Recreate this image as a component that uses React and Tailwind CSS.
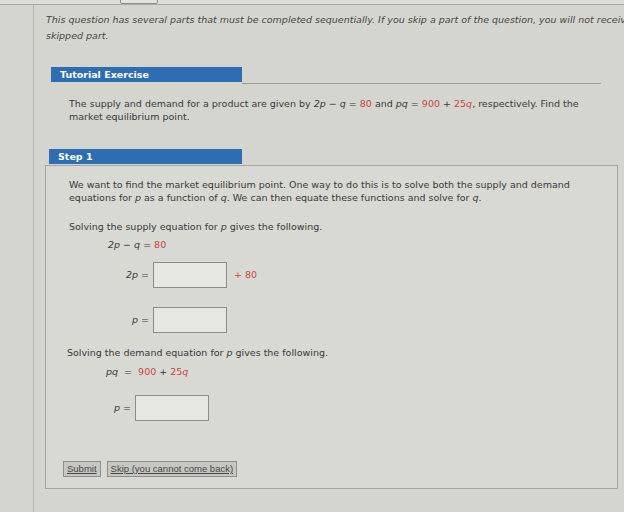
const RED = 'text-[#c8463f]'

function MathVar({ children }) {
  return <i className="font-normal">{children}</i>
}

function AnswerBox() {
  return <div className="w-[74px] h-[26px] border border-[#8c8c88] bg-[#e6e6e2]" />
}

export default function App() {
  return (
    <div
      className="w-[624px] h-[512px] overflow-hidden bg-[#d5d5d0] text-[#383836] relative"
      style={{ fontFamily: '"DejaVu Sans", Verdana, sans-serif' }}
    >
      {/* top strip with bottom of a button */}
      <div className="h-[5px] border-b border-[#a9a9a5] bg-[#dcdcd8] relative">
        <div className="absolute left-[120px] top-[-4px] w-[38px] h-[8px] border border-[#8f8f8b] rounded-b-[2px] bg-[#e2e2de]" />
      </div>

      <div className="ml-[33px] border-l border-[#b5b5b0] h-[507px] pl-[12px]">
        {/* intro */}
        <p className="italic text-[9.5px] leading-[16px] pt-[7px] text-[#454543] whitespace-nowrap">
          This question has several parts that must be completed sequentially. If you skip a part of the question, you will not receive
          <br />
          skipped part.
        </p>

        {/* tutorial exercise */}
        <div className="mt-[23px] ml-[5px] flex items-end">
          <div className="w-[191px] h-[15px] bg-[#2f6db3] text-white font-bold text-[9.5px] leading-[15px] pl-[9px]">
            Tutorial Exercise
          </div>
          <div className="w-[359px] border-b border-[#9a9a96] mb-[-2px]" />
        </div>
        <p className="ml-[23px] mt-[15px] text-[9.5px] leading-[13px] w-[518px]">
          The supply and demand for a product are given by <MathVar>2p</MathVar> − <MathVar>q</MathVar> ={' '}
          <span className={RED}>80</span> and <MathVar>pq</MathVar> = <span className={RED}>900</span> +{' '}
          <span className={RED}>
            25<MathVar>q</MathVar>
          </span>
          , respectively. Find the market equilibrium point.
        </p>

        {/* step 1 */}
        <div className="mt-[26px] ml-[3px] w-[193px] h-[15px] bg-[#2f6db3] text-white font-bold text-[9.5px] leading-[15px] pl-[9px]">
          Step 1
        </div>
        <div className="ml-[-1px] mt-[1px] w-[573px] h-[324px] border border-[#a3a39f] bg-[#d9d9d4] pl-[23px] pt-[12px]">
          <p className="text-[9.5px] leading-[13px] w-[512px]">
            We want to find the market equilibrium point. One way to do this is to solve both the supply and demand equations
            for <MathVar>p</MathVar> as a function of <MathVar>q</MathVar>. We can then equate these functions and solve for{' '}
            <MathVar>q</MathVar>.
          </p>

          <p className="mt-[16px] text-[9.5px] leading-[13px]">
            Solving the supply equation for <MathVar>p</MathVar> gives the following.
          </p>
          <p className="ml-[39px] mt-[5px] text-[9.5px] leading-[13px]">
            <MathVar>2p</MathVar> − <MathVar>q</MathVar> = <span className={RED}>80</span>
          </p>

          <div className="mt-[11px] flex items-center text-[9.5px]">
            <span className="w-[84px] text-right pr-[4px]">
              <MathVar>2p</MathVar> =
            </span>
            <AnswerBox />
            <span className={`ml-[7px] ${RED}`}>+ 80</span>
          </div>

          <div className="mt-[19px] flex items-center text-[9.5px]">
            <span className="w-[84px] text-right pr-[4px]">
              <MathVar>p</MathVar> =
            </span>
            <AnswerBox />
          </div>

          <p className="mt-[13px] text-[9.5px] leading-[13px] -ml-[2px]">
            Solving the demand equation for <MathVar>p</MathVar> gives the following.
          </p>
          <p className="ml-[37px] mt-[6px] text-[9.5px] leading-[13px]">
            <MathVar>pq</MathVar> &nbsp;= &nbsp;<span className={RED}>900</span> +{' '}
            <span className={RED}>
              25<MathVar>q</MathVar>
            </span>
          </p>

          <div className="mt-[17px] flex items-center text-[9.5px]">
            <span className="w-[66px] text-right pr-[4px]">
              <MathVar>p</MathVar> =
            </span>
            <AnswerBox />
          </div>

          <div
            className="mt-[40px] -ml-[6px] flex gap-[6px]"
            style={{ fontFamily: '"Liberation Sans", Arial, sans-serif' }}
          >
            <span className="border border-[#8e8e8a] bg-[#c6c6c2] px-[3px] h-[16px] leading-[14px] underline text-[#474745] text-[9.5px]">
              Submit
            </span>
            <span className="border border-[#8e8e8a] bg-[#c6c6c2] px-[3px] h-[16px] leading-[14px] underline text-[#474745] text-[9.5px]">
              Skip (you cannot come back)
            </span>
          </div>
        </div>
      </div>
    </div>
  )
}
